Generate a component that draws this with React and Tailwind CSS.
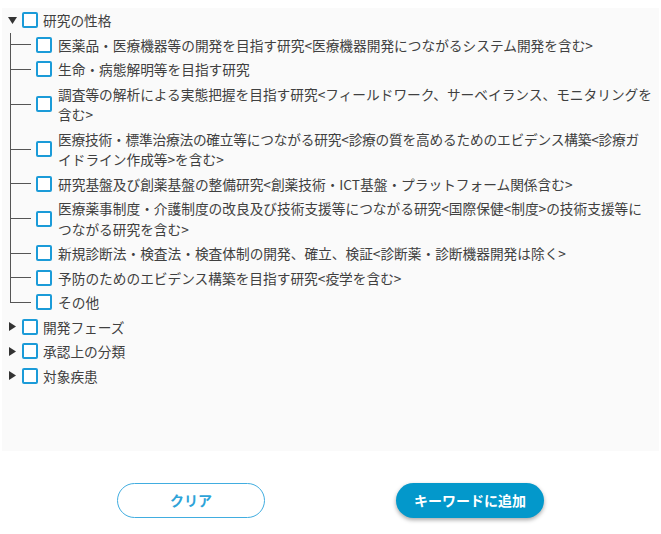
import React from "react";

const FONT = { fontFamily: '"Noto Sans CJK JP", "Noto Sans", sans-serif' };

function Box() {
  return <span className="block w-[16px] h-[16px] shrink-0 rounded-[2px] border-2 border-[#1b9bd8] bg-white" />;
}

function Down() {
  return (
    <svg width="9" height="7" viewBox="0 0 9 7" className="shrink-0">
      <polygon points="0,0 9,0 4.5,7" fill="#333" />
    </svg>
  );
}

function Right() {
  return (
    <svg width="7" height="9" viewBox="0 0 7 9" className="shrink-0">
      <polygon points="0,0 7,4.5 0,9" fill="#333" />
    </svg>
  );
}

const children = [
  ["医薬品・医療機器等の開発を目指す研究<医療機器開発につながるシステム開発を含む>"],
  ["生命・病態解明等を目指す研究"],
  ["調査等の解析による実態把握を目指す研究<フィールドワーク、サーベイランス、モニタリングを", "含む>"],
  ["医療技術・標準治療法の確立等につながる研究<診療の質を高めるためのエビデンス構築<診療ガ", "イドライン作成等>を含む>"],
  ["研究基盤及び創薬基盤の整備研究<創薬技術・ICT基盤・プラットフォーム関係含む>"],
  ["医療薬事制度・介護制度の改良及び技術支援等につながる研究<国際保健<制度>の技術支援等に", "つながる研究を含む>"],
  ["新規診断法・検査法・検査体制の開発、確立、検証<診断薬・診断機器開発は除く>"],
  ["予防のためのエビデンス構築を目指す研究<疫学を含む>"],
  ["その他"],
];

function ChildRow({ lines, last, tight }) {
  return (
    <div className="flex items-stretch ml-[8px]">
      <div className="flex flex-col w-[21px] shrink-0">
        <div className="flex-1 border-l border-b border-[#555]" />
        <div className={"flex-1 border-l " + (last ? "border-transparent" : "border-[#555]")} />
      </div>
      <div className="flex items-center py-[2px] ml-[5px]">
        <Box />
        <span className="ml-[6px] flex flex-col text-[13.7px] leading-[20.5px] text-[#404040] whitespace-nowrap">
          {lines.map((l, i) => (
            <span key={i} className={tight && i === 0 ? "tracking-[-0.2px]" : ""}>
              {l}
            </span>
          ))}
        </span>
      </div>
    </div>
  );
}

function TopRow({ text, open }) {
  return (
    <div className="flex items-center pl-[5px] py-[2px]">
      <span className="w-[10px] flex justify-center">{open ? <Down /> : <Right />}</span>
      <span className="ml-[5px]"><Box /></span>
      <span className="ml-[5px] text-[13.7px] leading-[20.5px] text-[#404040]">{text}</span>
    </div>
  );
}

export default function App() {
  return (
    <div className="w-[661px] h-[534px] bg-white overflow-hidden" style={FONT}>
      <div className="mt-[8px] mx-[2px] h-[443px] bg-[#fafafa] flex flex-col">
        <TopRow text="研究の性格" open />
        {children.map((l, i) => (
          <ChildRow key={i} lines={l} tight={i === 3} last={i === children.length - 1} />
        ))}
        <TopRow text="開発フェーズ" />
        <TopRow text="承認上の分類" />
        <TopRow text="対象疾患" />
      </div>
      <div className="flex justify-center gap-[131px] mt-[32px]">
        <button className="w-[148px] h-[35px] rounded-full border-[1.5px] border-[#41ade0] bg-white text-[#2ea3d8] text-[14px] font-bold">
          クリア
        </button>
        <button className="w-[148px] h-[35px] rounded-full bg-[#0398cb] text-white text-[14px] font-bold shadow-[0_2px_4px_rgba(0,0,0,0.35)]">
          キーワードに追加
        </button>
      </div>
    </div>
  );
}
